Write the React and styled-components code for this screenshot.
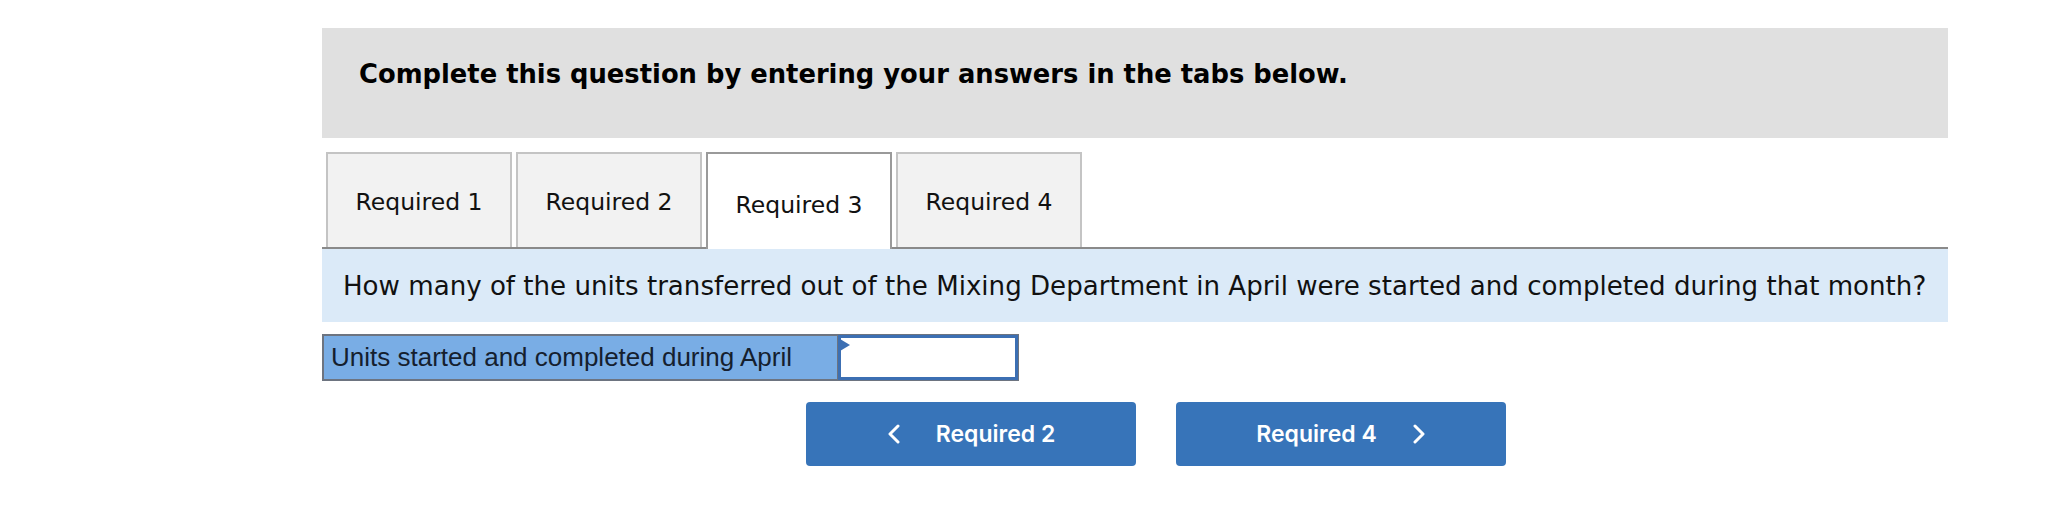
import React from 'react';
import styled, { createGlobalStyle } from 'styled-components';

const GlobalStyle = createGlobalStyle`
  html, body {
    margin: 0;
    padding: 0;
    background: #fff;
  }
`;

const Page = styled.div`
  padding: 28px 0 0 322px;
`;

const Content = styled.div`
  width: 1626px;
  display: flex;
  flex-direction: column;
`;

const Header = styled.div`
  height: 110px;
  box-sizing: border-box;
  background-color: #e0e0e0;
  padding: 28px 37px 0;
  font-family: "DejaVu Sans", Verdana, sans-serif;
  font-weight: bold;
  font-size: 25.8px;
  line-height: 36px;
  color: #000;
`;

const TabList = styled.div`
  display: flex;
  gap: 4px;
  margin-top: 14px;
  padding-left: 4px;
  border-bottom: 2px solid #8a8a8a;
`;

const Tab = styled.div`
  width: 186px;
  box-sizing: border-box;
  display: flex;
  align-items: center;
  justify-content: center;
  padding-top: ${(p) => (p.$active ? '6px' : '3px')};
  font-family: "DejaVu Sans", Verdana, sans-serif;
  font-size: 23.5px;
  color: #111;
  background-color: ${(p) => (p.$active ? '#fff' : '#f2f2f2')};
  border: 2px solid ${(p) => (p.$active ? '#9a9a9a' : '#c4c4c4')};
  border-bottom: none;
  margin-bottom: ${(p) => (p.$active ? '-2px' : '0')};
  height: ${(p) => (p.$active ? '97px' : '95px')};
`;

const Question = styled.div`
  height: 73px;
  box-sizing: border-box;
  background-color: #dbeaf8;
  display: flex;
  align-items: center;
  padding: 0 21px;
  font-family: "DejaVu Sans", Verdana, sans-serif;
  font-size: 26.1px;
  color: #111;
`;

const AnswerRow = styled.div`
  display: flex;
  margin-top: 12px;
  height: 47px;
`;

const Label = styled.div`
  width: 515px;
  box-sizing: border-box;
  background-color: #79ade5;
  border: 2px solid #6d7480;
  border-right: none;
  display: flex;
  align-items: center;
  padding-left: 7px;
  font-family: "Liberation Sans", Arial, sans-serif;
  font-size: 26px;
  color: #15202e;
`;

const InputWrap = styled.div`
  position: relative;
  width: 182px;
  box-sizing: border-box;
  border: 1px solid #6d7480;
  background: #fff;
`;

const Input = styled.input`
  width: 100%;
  height: 100%;
  box-sizing: border-box;
  border: 3px solid #3c6fb3;
  outline: none;
  background: #fff;
  font-family: "Liberation Sans", Arial, sans-serif;
  font-size: 24px;
  text-align: right;
  padding: 0 8px;
`;

const Marker = styled.span`
  position: absolute;
  top: 4px;
  left: 2px;
  width: 0;
  height: 0;
  border-top: 6px solid transparent;
  border-bottom: 6px solid transparent;
  border-left: 10px solid #3c6fb3;
`;

const Nav = styled.div`
  display: flex;
  justify-content: center;
  gap: 40px;
  margin-top: 21px;
  padding-left: 42px;
`;

const NavButton = styled.button`
  width: 330px;
  height: 64px;
  border: none;
  border-radius: 4px;
  background-color: #3774b9;
  color: #fff;
  display: flex;
  align-items: center;
  justify-content: center;
  gap: 35px;
  font-family: Inter, "Open Sans", sans-serif;
  font-weight: 600;
  font-size: 23px;
  cursor: pointer;
  padding: 0;
`;

const Chevron = ({ dir }) => (
  <svg width="14" height="20" viewBox="0 0 14 20" aria-hidden="true">
    <polyline
      points={dir === 'left' ? '11,2 3,10 11,18' : '3,2 11,10 3,18'}
      fill="none"
      stroke="#fff"
      strokeWidth="3"
      strokeLinecap="round"
      strokeLinejoin="round"
    />
  </svg>
);

const tabs = ['Required 1', 'Required 2', 'Required 3', 'Required 4'];

export default function App() {
  const active = 2;
  return (
    <>
      <GlobalStyle />
      <Page>
        <Content>
          <Header>Complete this question by entering your answers in the tabs below.</Header>
          <TabList>
            {tabs.map((t, i) => (
              <Tab key={t} $active={i === active}>{t}</Tab>
            ))}
          </TabList>
          <Question>
            How many of the units transferred out of the Mixing Department in April were started and completed during that month?
          </Question>
          <AnswerRow>
            <Label>Units started and completed during April</Label>
            <InputWrap>
              <Input type="text" aria-label="Units started and completed during April" />
              <Marker />
            </InputWrap>
          </AnswerRow>
          <Nav>
            <NavButton>
              <Chevron dir="left" />
              <span>Required 2</span>
            </NavButton>
            <NavButton>
              <span>Required 4</span>
              <Chevron dir="right" />
            </NavButton>
          </Nav>
        </Content>
      </Page>
    </>
  );
}
